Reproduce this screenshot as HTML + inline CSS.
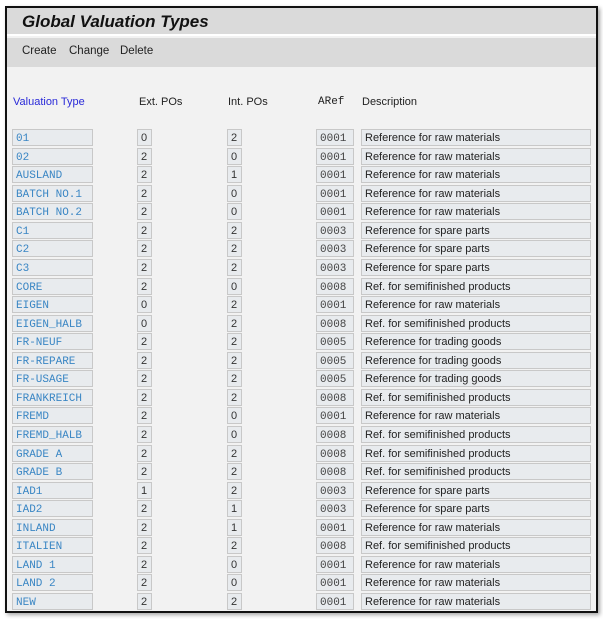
<!DOCTYPE html>
<html><head><meta charset="utf-8"><style>
*{margin:0;padding:0;box-sizing:border-box}
body{width:603px;height:619px;background:#fff;position:relative;overflow:hidden;font-family:"Liberation Sans",sans-serif}
.frame{position:absolute;left:5px;top:6px;width:593px;height:607px;border:2px solid #111;background:#f2f2f2;box-shadow:2px 2px 4px rgba(0,0,0,.35);overflow:hidden}
.title{position:absolute;left:0;top:0;width:100%;height:28px;background:#dadada;border-bottom:2px solid #fff}
.title span{position:absolute;left:15px;top:4px;font-size:17px;font-weight:bold;font-style:italic;color:#111}
.tb{position:absolute;left:0;top:30px;width:100%;height:29px;background:#dadada;font-size:11.5px;color:#222}
.tb span{position:absolute;top:7px}
.hd{position:absolute;top:88px;font-size:11px;color:#222}
.r{position:absolute;left:0;width:100%;height:17px}
.f{position:absolute;top:0;height:17px;background:#e8ebee;border:1px solid #c8c8c8;font-size:11px;padding-left:3px;color:#333;display:block;white-space:pre;line-height:13px;padding-top:2px}
.a,.d{line-height:12px;padding-top:3px}
.a{left:5px;width:81px;font-family:"Liberation Mono",monospace;color:#3a86c4;font-size:11px}
.b{left:130px;width:15px}
.c{left:220px;width:15px}
.d{left:309px;width:38px;font-family:"Liberation Mono",monospace;color:#444}
.e{left:354px;width:230px;color:#222;font-size:11px}
</style></head><body>
<div class="frame">
<div class="title"><span>Global Valuation Types</span></div>
<div class="tb"><span style="left:15px">Create</span><span style="left:62px">Change</span><span style="left:113px">Delete</span></div>
<div class="hd" style="left:6px;color:#2a2ad8">Valuation Type</div>
<div class="hd" style="left:132px">Ext. POs</div>
<div class="hd" style="left:221px">Int. POs</div>
<div class="hd" style="left:311px;font-family:'Liberation Mono',monospace;font-size:11px;top:88px">ARef</div>
<div class="hd" style="left:355px">Description</div>

<div class="r" style="top:121px"><div class="f a">01</div><div class="f b">0</div><div class="f c">2</div><div class="f d">0001</div><div class="f e">Reference for raw materials</div></div>
<div class="r" style="top:139.6px"><div class="f a">02</div><div class="f b">2</div><div class="f c">0</div><div class="f d">0001</div><div class="f e">Reference for raw materials</div></div>
<div class="r" style="top:158.1px"><div class="f a">AUSLAND</div><div class="f b">2</div><div class="f c">1</div><div class="f d">0001</div><div class="f e">Reference for raw materials</div></div>
<div class="r" style="top:176.7px"><div class="f a">BATCH NO.1</div><div class="f b">2</div><div class="f c">0</div><div class="f d">0001</div><div class="f e">Reference for raw materials</div></div>
<div class="r" style="top:195.2px"><div class="f a">BATCH NO.2</div><div class="f b">2</div><div class="f c">0</div><div class="f d">0001</div><div class="f e">Reference for raw materials</div></div>
<div class="r" style="top:213.8px"><div class="f a">C1</div><div class="f b">2</div><div class="f c">2</div><div class="f d">0003</div><div class="f e">Reference for spare parts</div></div>
<div class="r" style="top:232.4px"><div class="f a">C2</div><div class="f b">2</div><div class="f c">2</div><div class="f d">0003</div><div class="f e">Reference for spare parts</div></div>
<div class="r" style="top:250.9px"><div class="f a">C3</div><div class="f b">2</div><div class="f c">2</div><div class="f d">0003</div><div class="f e">Reference for spare parts</div></div>
<div class="r" style="top:269.5px"><div class="f a">CORE</div><div class="f b">2</div><div class="f c">0</div><div class="f d">0008</div><div class="f e">Ref. for semifinished products</div></div>
<div class="r" style="top:288px"><div class="f a">EIGEN</div><div class="f b">0</div><div class="f c">2</div><div class="f d">0001</div><div class="f e">Reference for raw materials</div></div>
<div class="r" style="top:306.6px"><div class="f a">EIGEN_HALB</div><div class="f b">0</div><div class="f c">2</div><div class="f d">0008</div><div class="f e">Ref. for semifinished products</div></div>
<div class="r" style="top:325.2px"><div class="f a">FR-NEUF</div><div class="f b">2</div><div class="f c">2</div><div class="f d">0005</div><div class="f e">Reference for trading goods</div></div>
<div class="r" style="top:343.7px"><div class="f a">FR-REPARE</div><div class="f b">2</div><div class="f c">2</div><div class="f d">0005</div><div class="f e">Reference for trading goods</div></div>
<div class="r" style="top:362.3px"><div class="f a">FR-USAGE</div><div class="f b">2</div><div class="f c">2</div><div class="f d">0005</div><div class="f e">Reference for trading goods</div></div>
<div class="r" style="top:380.8px"><div class="f a">FRANKREICH</div><div class="f b">2</div><div class="f c">2</div><div class="f d">0008</div><div class="f e">Ref. for semifinished products</div></div>
<div class="r" style="top:399.4px"><div class="f a">FREMD</div><div class="f b">2</div><div class="f c">0</div><div class="f d">0001</div><div class="f e">Reference for raw materials</div></div>
<div class="r" style="top:418px"><div class="f a">FREMD_HALB</div><div class="f b">2</div><div class="f c">0</div><div class="f d">0008</div><div class="f e">Ref. for semifinished products</div></div>
<div class="r" style="top:436.5px"><div class="f a">GRADE A</div><div class="f b">2</div><div class="f c">2</div><div class="f d">0008</div><div class="f e">Ref. for semifinished products</div></div>
<div class="r" style="top:455.1px"><div class="f a">GRADE B</div><div class="f b">2</div><div class="f c">2</div><div class="f d">0008</div><div class="f e">Ref. for semifinished products</div></div>
<div class="r" style="top:473.6px"><div class="f a">IAD1</div><div class="f b">1</div><div class="f c">2</div><div class="f d">0003</div><div class="f e">Reference for spare parts</div></div>
<div class="r" style="top:492.2px"><div class="f a">IAD2</div><div class="f b">2</div><div class="f c">1</div><div class="f d">0003</div><div class="f e">Reference for spare parts</div></div>
<div class="r" style="top:510.8px"><div class="f a">INLAND</div><div class="f b">2</div><div class="f c">1</div><div class="f d">0001</div><div class="f e">Reference for raw materials</div></div>
<div class="r" style="top:529.3px"><div class="f a">ITALIEN</div><div class="f b">2</div><div class="f c">2</div><div class="f d">0008</div><div class="f e">Ref. for semifinished products</div></div>
<div class="r" style="top:547.9px"><div class="f a">LAND 1</div><div class="f b">2</div><div class="f c">0</div><div class="f d">0001</div><div class="f e">Reference for raw materials</div></div>
<div class="r" style="top:566.4px"><div class="f a">LAND 2</div><div class="f b">2</div><div class="f c">0</div><div class="f d">0001</div><div class="f e">Reference for raw materials</div></div>
<div class="r" style="top:585px"><div class="f a">NEW</div><div class="f b">2</div><div class="f c">2</div><div class="f d">0001</div><div class="f e">Reference for raw materials</div></div>
</div>
</body></html>
